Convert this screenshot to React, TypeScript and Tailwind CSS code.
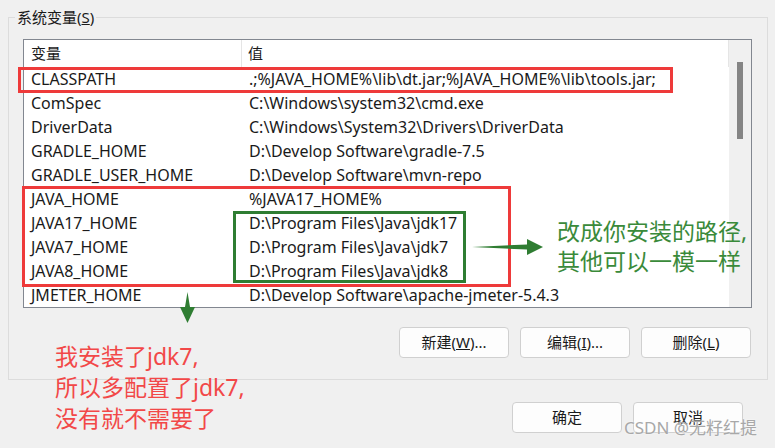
// Windows "系统变量" environment variables dialog with annotations
const rows: [string, string][] = [
  ["CLASSPATH", ".;%JAVA_HOME%\\lib\\dt.jar;%JAVA_HOME%\\lib\\tools.jar;"],
  ["ComSpec", "C:\\Windows\\system32\\cmd.exe"],
  ["DriverData", "C:\\Windows\\System32\\Drivers\\DriverData"],
  ["GRADLE_HOME", "D:\\Develop Software\\gradle-7.5"],
  ["GRADLE_USER_HOME", "D:\\Develop Software\\mvn-repo"],
  ["JAVA_HOME", "%JAVA17_HOME%"],
  ["JAVA17_HOME", "D:\\Program Files\\Java\\jdk17"],
  ["JAVA7_HOME", "D:\\Program Files\\Java\\jdk7"],
  ["JAVA8_HOME", "D:\\Program Files\\Java\\jdk8"],
  ["JMETER_HOME", "D:\\Develop Software\\apache-jmeter-5.4.3"],
];

const font = "font-['Noto_Sans','Noto_Sans_CJK_SC',sans-serif]";

const DialogButton = ({ label, hotkey, tail }: { label: string; hotkey: string; tail?: string }) => (
  <button
    type="button"
    className="w-[110px] h-[31px] flex items-center justify-center bg-[#fdfdfd] border border-[#d0d0d0] rounded-[4px] text-[15px] text-[#1a1a1a]"
  >
    {label}(<span className="underline">{hotkey}</span>){tail}
  </button>
);

export default function App() {
  return (
    <div className={`relative w-[775px] h-[448px] bg-[#f0f0f0] overflow-hidden ${font}`}>
      {/* group box */}
      <div className="pt-[17px] pl-[8px]">
        <div className="relative w-[760px] h-[363px] border border-[#dcdcdc]">
          <div className="absolute left-[6px] -top-[11px] px-[2px] bg-[#f0f0f0] text-[15px] leading-[20px] text-[#1a1a1a]">
            系统变量(<span className="underline">S</span>)
          </div>

          <div className="ml-[14px] mt-[21px] w-[729px] h-[269px] border border-[#828790] bg-white flex">
            <div className="w-[705px] flex flex-col text-[16px] text-[#1a1a1a]">
              <div className="h-[27px] flex items-center shrink-0 text-[15px]">
                <div className="w-[218px] h-full pl-[7px] flex items-center border-r border-[#e5e5e5]">变量</div>
                <div className="flex-1 h-full pl-[6px] flex items-center border-r border-[#e5e5e5]">值</div>
              </div>
              {rows.map(([name, value]) => (
                <div key={name} className="h-[24px] flex items-center shrink-0">
                  <div className="w-[218px] pl-[7px] whitespace-nowrap">{name}</div>
                  <div className="flex-1 pl-[7px] whitespace-nowrap">{value}</div>
                </div>
              ))}
            </div>
            <div className="flex-1 bg-[#f0f0f0] pt-[22px] pl-[8px]">
              <div className="w-[6px] h-[77px] bg-[#858585]" />
            </div>
          </div>

          <div className="flex justify-end gap-[11px] pr-[16px] mt-[19px]">
            <DialogButton label="新建" hotkey="W" tail="..." />
            <DialogButton label="编辑" hotkey="I" tail="..." />
            <DialogButton label="删除" hotkey="L" />
          </div>
        </div>
      </div>

      <div className="flex justify-end gap-[11px] pr-[32px] mt-[22px]">
        <button type="button" className="w-[110px] h-[31px] bg-[#fdfdfd] border border-[#d0d0d0] rounded-[4px] text-[15px] text-[#1a1a1a]">确定</button>
        <button type="button" className="w-[110px] h-[31px] bg-[#fdfdfd] border border-[#d0d0d0] rounded-[4px] text-[15px] text-[#1a1a1a]">取消</button>
      </div>

      {/* annotation boxes */}
      <div className="absolute left-[18px] top-[67px] w-[655px] h-[26px] border-[3px] border-[#ee3a3a]" />
      <div className="absolute left-[22px] top-[186px] w-[489px] h-[101px] border-[3px] border-[#ee3a3a]" />
      <div className="absolute left-[233px] top-[211px] w-[233px] h-[72px] border-[3px] border-[#2f7d32]" />

      {/* arrows */}
      <svg className="absolute left-0 top-0" width="775" height="448">
        <polygon points="472,247 527,244.5 527,239 543,247 527,255 527,249.5" fill="#2f7d32" />
        <polygon points="187.5,292 190,307 195,307 187.5,323 180,307 185,307" fill="#2f7d32" />
      </svg>

      {/* annotation texts */}
      <div className="absolute left-[557px] top-[216px] text-[23px] leading-[30px] text-[#3a8a3a]">
        <div>改成你安装的路径,</div>
        <div>其他可以一模一样</div>
      </div>
      <div className="absolute left-[55px] top-[341px] text-[23px] leading-[31px] text-[#f24848]">
        <div>我安装了jdk7,</div>
        <div>所以多配置了jdk7,</div>
        <div>没有就不需要了</div>
      </div>

      <div className="absolute left-[624px] top-[416px] text-[17px] leading-[24px] text-[#a8a8a8] [text-shadow:0_0_2px_#ffffff]">
        CSDN @无籽红提
      </div>
    </div>
  );
}
